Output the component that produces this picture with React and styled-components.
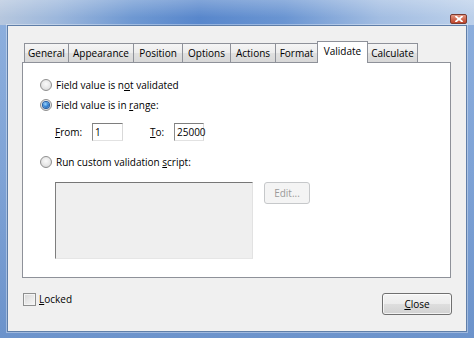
import React from 'react';
import styled, { createGlobalStyle, css } from 'styled-components';

const Global = createGlobalStyle`
  html, body { margin: 0; padding: 0; background: #fff; }
  body {
    font-family: "Open Sans", "Noto Sans", sans-serif;
    font-size: 10px;
    color: #000;
  }
  * { box-sizing: border-box; }
  u { text-decoration-thickness: 1px; text-underline-offset: 1px; }
`;

const Window = styled.div`
  width: 474px;
  height: 338px;
  display: flex;
  flex-direction: column;
  padding: 0 7px 6px 7px;
  background: linear-gradient(to bottom, #8eb0de 0%, #7fa3d6 50%, #6c93cb 100%);
`;

const TitleBar = styled.div`
  height: 25px;
  margin: 0 -7px;
  padding: 14px 7px 0 7px;
  display: flex;
  justify-content: flex-end;
  align-items: flex-start;
  background:
    linear-gradient(to bottom, rgba(255,255,255,0.25), rgba(255,255,255,0) 70%),
    linear-gradient(to right, #b6c7de 0%, #9cb7dc 12%, #6e98d2 28%, #5887cc 42%, #6a95d2 60%, #a2bde2 80%, #bcd0ea 100%);
`;

const CloseGlyph = styled.div`
  width: 17px;
  height: 10px;
  border: 1px solid #7a3a30;
  border-radius: 2px;
  background: linear-gradient(to bottom, #e49a86 0%, #d06a52 50%, #c0452c 100%);
  display: flex;
  align-items: center;
  justify-content: center;
  svg { display: block; }
`;

const Client = styled.div`
  flex: 1;
  display: flex;
  flex-direction: column;
  background: #f0f0f0;
  border: 1px solid #5f7ea8;
  box-shadow: 0 0 0 1px rgba(255,255,255,0.35);
  padding: 15px 15px 0 14px;
`;

const TabStrip = styled.div`
  display: flex;
  align-items: flex-end;
  height: 21px;
  padding-left: 2px;
  position: relative;
  z-index: 1;
`;

const Tab = styled.div`
  width: ${p => p.$w}px;
  height: 19px;
  margin-left: -1px;
  border: 1px solid #8e9199;
  border-bottom: none;
  background: linear-gradient(to bottom, #f5f5f5 0%, #ececec 50%, #e0e0e0 51%, #d8d8d8 100%);
  display: flex;
  align-items: center;
  justify-content: center;
  padding-bottom: 1px;
  white-space: nowrap;
  &:first-child { margin-left: 0; }
  ${p => p.$active && css`
    height: 22px;
    margin-bottom: -1px;
    background: #fff;
    padding-bottom: 3px;
    position: relative;
    z-index: 2;
  `}
`;

const Panel = styled.div`
  width: 429px;
  height: 216px;
  background: #fff;
  border: 1px solid #8e9199;
  padding: 14px 0 0 17px;
  display: flex;
  flex-direction: column;
`;

const OptionRow = styled.label`
  display: flex;
  align-items: center;
  height: 16px;
  gap: 4px;
  margin-top: ${p => p.$mt || 0}px;
  white-space: nowrap;
`;

const Radio = styled.span`
  width: 12px;
  height: 12px;
  border-radius: 50%;
  border: 1px solid #8f8f8f;
  background: radial-gradient(circle at 50% 40%, #fafafa 0%, #e6e6e6 55%, #cfcfcf 100%);
  display: flex;
  align-items: center;
  justify-content: center;
  flex: none;
  ${p => p.$checked && css`
    &::after {
      content: "";
      width: 6px;
      height: 6px;
      border-radius: 50%;
      background: radial-gradient(circle at 40% 35%, #9fd6fb 0%, #3c8ad8 45%, #15509c 100%);
      box-shadow: 0 0 0 1px #245da3;
    }
  `}
`;

const RangeRow = styled.div`
  display: flex;
  align-items: center;
  height: 18px;
  margin-top: 10px;
  padding-left: 15px;
`;

const FieldLabel = styled.span`
  width: ${p => p.$w}px;
  flex: none;
`;

const TextInput = styled.div`
  width: ${p => p.$w}px;
  height: 18px;
  flex: none;
  background: #fff;
  border-top: 1px solid #7e7e7e;
  border-left: 1px solid #8a8a8a;
  border-right: 1px solid #d9d9d9;
  border-bottom: 1px solid #e2e2e2;
  padding: 0 2px;
  display: flex;
  align-items: center;
  margin-right: ${p => p.$mr || 0}px;
`;

const ScriptRow = styled.div`
  display: flex;
  align-items: flex-start;
  gap: 11px;
  margin-top: 12px;
  padding-left: 15px;
`;

const ScriptBox = styled.div`
  width: 198px;
  height: 77px;
  background: #efefef;
  border-top: 1px solid #767676;
  border-left: 1px solid #7e7e7e;
  border-right: 1px solid #e2e2e2;
  border-bottom: 1px solid #e6e6e6;
`;

const Button = styled.div`
  width: ${p => p.$w}px;
  height: 22px;
  border-radius: 3px;
  display: flex;
  align-items: center;
  justify-content: center;
  padding-bottom: 1px;
  ${p => p.$disabled ? css`
    border: 1px solid #c6c8ca;
    background: #f4f4f4;
    color: #9a9a9a;
  ` : css`
    border: 1px solid #707070;
    background: linear-gradient(to bottom, #f4f4f4 0%, #ececec 50%, #dedede 51%, #d2d2d2 100%);
    box-shadow: inset 0 0 0 1px rgba(255,255,255,0.7);
  `}
`;

const BottomRow = styled.div`
  display: flex;
  justify-content: space-between;
  align-items: flex-start;
  margin-top: 14px;
  margin-right: -1px;
`;

const CheckRow = styled.label`
  display: flex;
  align-items: center;
  gap: 3px;
  height: 14px;
  margin-left: 1px;
`;

const Checkbox = styled.span`
  width: 13px;
  height: 13px;
  flex: none;
  border: 1px solid #8e8f8f;
  background: linear-gradient(135deg, #d6d6d6 0%, #e8e8e8 50%, #f7f7f7 100%);
  box-shadow: inset 0 0 0 1px #f4f4f4;
`;

const CloseWrap = styled.div`
  margin-top: 1px;
`;

const tabs = [
  ['General', 45],
  ['Appearance', 66],
  ['Position', 50],
  ['Options', 49],
  ['Actions', 46],
  ['Format', 43],
  ['Validate', 51],
  ['Calculate', 51],
];

export default function App() {
  return (
    <>
      <Global />
      <Window>
        <TitleBar>
          <CloseGlyph>
            <svg width="8" height="6" viewBox="0 0 8 6">
              <path d="M1 0.5 L7 5.5 M7 0.5 L1 5.5" stroke="#fff" strokeWidth="1.8" strokeLinecap="round" />
            </svg>
          </CloseGlyph>
        </TitleBar>
        <Client>
          <TabStrip>
            {tabs.map(([name, w]) => (
              <Tab key={name} $w={w} $active={name === 'Validate'}>{name}</Tab>
            ))}
          </TabStrip>
          <Panel>
            <OptionRow>
              <Radio />
              <span>Field value is n<u>o</u>t validated</span>
            </OptionRow>
            <OptionRow $mt={4}>
              <Radio $checked />
              <span>Field value is in <u>r</u>ange:</span>
            </OptionRow>
            <RangeRow>
              <FieldLabel $w={37}><u>F</u>rom:</FieldLabel>
              <TextInput $w={31} $mr={27}>1</TextInput>
              <FieldLabel $w={24}><u>T</u>o:</FieldLabel>
              <TextInput $w={30}>25000</TextInput>
            </RangeRow>
            <OptionRow $mt={13}>
              <Radio />
              <span>Run custom validation <u>s</u>cript:</span>
            </OptionRow>
            <ScriptRow>
              <ScriptBox />
              <Button $w={46} $disabled>Edit...</Button>
            </ScriptRow>
          </Panel>
          <BottomRow>
            <CheckRow>
              <Checkbox />
              <span><u>L</u>ocked</span>
            </CheckRow>
            <CloseWrap>
              <Button $w={70}><span><u>C</u>lose</span></Button>
            </CloseWrap>
          </BottomRow>
        </Client>
      </Window>
    </>
  );
}
